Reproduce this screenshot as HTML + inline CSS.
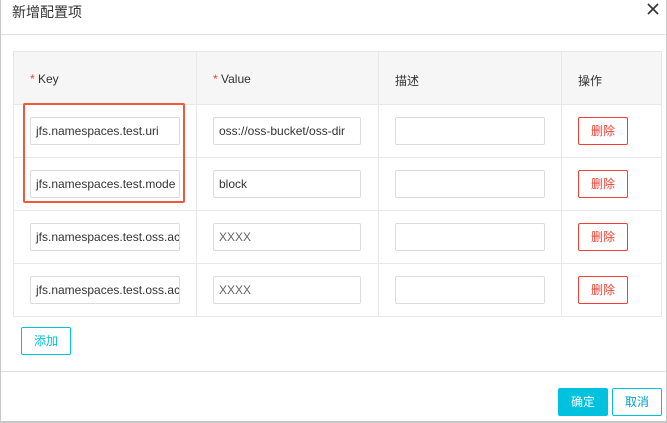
<!DOCTYPE html>
<html><head><meta charset="utf-8"><style>
*{box-sizing:border-box;margin:0;padding:0}
body{width:667px;height:423px;background:#fff;position:relative;overflow:hidden;font-family:"Liberation Sans","Noto Sans CJK SC",sans-serif;font-size:12px;color:#333}
.a{position:absolute}
.inp{position:absolute;height:28px;border:1px solid #dcdcdc;border-radius:2px;background:#fff;padding-left:5px;line-height:26px;font-size:12px;color:#333;white-space:nowrap;overflow:hidden}
.del{position:absolute;left:578px;width:50px;height:28px;border:1px solid #f04134;color:#f04134;text-align:center;line-height:26px;font-size:12px;border-radius:2px}
.hl{position:absolute;background:#e8e8e8}
</style></head><body>
<div class="a" style="left:0;top:0;width:667px;height:423px;border:1px solid #c8c8c8;border-top:none;border-bottom:2px solid #c8c8c8"></div>
<div class="a" style="left:12px;top:2px;font-size:14px;color:#333">新增配置项</div>
<svg class="a" style="left:647px;top:3px" width="12" height="12" viewBox="0 0 12 12"><path d="M1 1L11 11M11 1L1 11" stroke="#333" stroke-width="1.6"/></svg>
<div class="a" style="left:1px;top:34px;width:665px;height:1px;background:#e0e0e6"></div>
<div class="a" style="left:13px;top:51px;width:649px;height:53px;background:#f6f6f6"></div>
<div class="a" style="left:13px;top:51px;width:649px;height:266px;border:1px solid #e8e8e8"></div>
<div class="hl" style="left:13px;top:104px;width:649px;height:1px"></div>
<div class="hl" style="left:13px;top:157px;width:649px;height:1px"></div>
<div class="hl" style="left:13px;top:210px;width:649px;height:1px"></div>
<div class="hl" style="left:13px;top:263px;width:649px;height:1px"></div>
<div class="hl" style="left:196px;top:51px;width:1px;height:266px"></div>
<div class="hl" style="left:378px;top:51px;width:1px;height:266px"></div>
<div class="hl" style="left:561px;top:51px;width:1px;height:266px"></div>
<div class="a" style="left:30px;top:72px"><span style="color:#f04134">*</span> Key</div>
<div class="a" style="left:213px;top:72px"><span style="color:#f04134">*</span> Value</div>
<div class="a" style="left:395px;top:72px">描述</div>
<div class="a" style="left:578px;top:72px">操作</div>

<div class="inp" style="left:30px;top:117px;width:150px">jfs.namespaces.test.uri</div>
<div class="inp" style="left:213px;top:117px;width:148px">oss://oss-bucket/oss-dir</div>
<div class="inp" style="left:395px;top:117px;width:150px"></div>
<div class="del" style="top:117px">删除</div>

<div class="inp" style="left:30px;top:170px;width:150px">jfs.namespaces.test.mode</div>
<div class="inp" style="left:213px;top:170px;width:148px">block</div>
<div class="inp" style="left:395px;top:170px;width:150px"></div>
<div class="del" style="top:170px">删除</div>

<div class="inp" style="left:30px;top:223px;width:150px">jfs.namespaces.test.oss.acc</div>
<div class="inp" style="left:213px;top:223px;width:148px;color:#666">XXXX</div>
<div class="inp" style="left:395px;top:223px;width:150px"></div>
<div class="del" style="top:223px">删除</div>

<div class="inp" style="left:30px;top:276px;width:150px">jfs.namespaces.test.oss.acc</div>
<div class="inp" style="left:213px;top:276px;width:148px;color:#666">XXXX</div>
<div class="inp" style="left:395px;top:276px;width:150px"></div>
<div class="del" style="top:276px">删除</div>

<div class="a" style="left:23px;top:103px;width:162px;height:100px;border:2px solid #f05a3a;border-radius:2px"></div>

<div class="a" style="left:21px;top:327px;width:50px;height:28px;border:1px solid #00c1de;color:#00c1de;text-align:center;line-height:26px;border-radius:2px">添加</div>
<div class="a" style="left:1px;top:371px;width:665px;height:1px;background:#e0e0e0"></div>
<div class="a" style="left:558px;top:388px;width:50px;height:28px;background:#00c1de;color:#fff;text-align:center;line-height:28px;border-radius:2px">确定</div>
<div class="a" style="left:612px;top:388px;width:50px;height:28px;border:1px solid #00c1de;color:#00a2c4;text-align:center;line-height:26px;border-radius:2px">取消</div>
</body></html>
